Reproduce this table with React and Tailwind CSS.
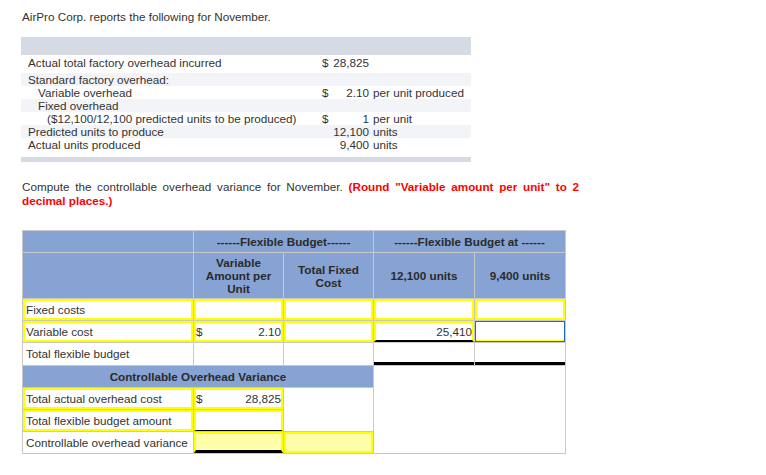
const TOP_ROWS = [
  { bg: "bg-white", h: "pt-px pb-[4px]", pad: "pl-[7px]", label: "Actual total factory overhead incurred", d: "$", amt: "28,825", unit: "" },
  { bg: "bg-[#f3f4f7]", h: "", pad: "pl-[7px]", label: "Standard factory overhead:", d: "", amt: "", unit: "" },
  { bg: "bg-white", h: "", pad: "pl-[17px]", label: "Variable overhead", d: "$", amt: "2.10", unit: "per unit produced" },
  { bg: "bg-[#f3f4f7]", h: "", pad: "pl-[17px]", label: "Fixed overhead", d: "", amt: "", unit: "" },
  { bg: "bg-white", h: "", pad: "pl-[26px]", label: "($12,100/12,100 predicted units to be produced)", d: "$", amt: "1", unit: "per unit" },
  { bg: "bg-[#f3f4f7]", h: "", pad: "pl-[7px]", label: "Predicted units to produce", d: "", amt: "12,100", unit: "units" },
  { bg: "bg-white", h: "", pad: "pl-[7px]", label: "Actual units produced", d: "", amt: "9,400", unit: "units" },
];

function TopRow({ r }) {
  return (
    <div className={`flex leading-[13px] ${r.bg} ${r.h}`}>
      <div className={`w-[297px] ${r.pad} whitespace-nowrap`}>{r.label}</div>
      <div className="w-[12px] pl-[4px]">{r.d}</div>
      <div className="w-[39px] text-right whitespace-nowrap">{r.amt}</div>
      <div className="flex-1 pl-[4px] whitespace-nowrap">{r.unit}</div>
    </div>
  );
}

const H = "bg-[#87a3d3] font-bold text-[#2a2a2a] flex items-center justify-center text-center leading-[13px]";
const W = "bg-white";
const IN = "bg-white border-2 border-[#ffff00]";

export default function App() {
  return (
    <div className="w-[766px] h-[475px] bg-white font-['Liberation_Sans',Arial,sans-serif] text-[11.7px] text-[#333] leading-[14px] pl-[21px] pt-[10px]">
      <p className="pl-px">AirPro Corp. reports the following for November.</p>

      <div className="mt-[13px] w-[450px]">
        <div className="h-[18px] bg-[#d6dae3]" />
        {TOP_ROWS.map((r, i) => (
          <TopRow key={i} r={r} />
        ))}
        <div className="h-[6px] bg-white" />
        <div className="h-[5px] bg-[#d6dae3]" />
      </div>

      <p className="mt-[18px] w-[558px] text-justify pl-px">
        Compute the controllable overhead variance for November.{" "}
        <span className="font-bold text-[#ff0000]">
          (Round "Variable amount per unit" to 2 decimal places.)
        </span>
      </p>

      <div className="mt-[22px] ml-px inline-grid grid-cols-[170px_89px_89px_100px_90px] grid-rows-[21px_45px_21px_21px_22px_21px_21px_21px_21px] gap-px bg-[#c8c8c8] p-px">
        {/* row 1 */}
        <div className={H} />
        <div className={`${H} col-span-2`}>------Flexible Budget------</div>
        <div className={`${H} col-span-2`}>------Flexible Budget at ------</div>

        {/* row 2 */}
        <div className={H} />
        <div className={H}>
          Variable
          <br />
          Amount per
          <br />
          Unit
        </div>
        <div className={H}>
          Total Fixed
          <br />
          Cost
        </div>
        <div className={H}>12,100 units</div>
        <div className={H}>9,400 units</div>

        {/* row 3 */}
        <div className={`${IN} flex items-center pl-px`}>Fixed costs</div>
        <div className={IN} />
        <div className={IN} />
        <div className={IN} />
        <div className={IN} />

        {/* row 4 */}
        <div className={`${IN} flex items-center pl-px`}>Variable cost</div>
        <div className={`${IN} flex items-center justify-between`}>
          <span>$</span>
          <span>2.10</span>
        </div>
        <div className={IN} />
        <div className="bg-white border-2 border-[#ffff00] border-b-black flex items-center justify-end">
          25,410
        </div>
        <div className="bg-white border border-[#1d6db5] shadow-[inset_0_-1px_0_#ffff00]" />

        {/* row 5 */}
        <div className={`${W} flex items-center pl-[3px]`}>Total flexible budget</div>
        <div className={W} />
        <div className={W} />
        <div className="bg-white border-b-[3px] border-black" />
        <div className="bg-white border-b-[3px] border-black" />

        {/* row 6 */}
        <div className={`${H} col-span-3`}>Controllable Overhead Variance</div>
        <div className="bg-white col-span-2 row-span-4" />

        {/* row 7 */}
        <div className={`${IN} flex items-center pl-px`}>Total actual overhead cost</div>
        <div className={`${IN} flex items-center justify-between`}>
          <span>$</span>
          <span>28,825</span>
        </div>
        <div className="bg-white row-span-2" />

        {/* row 8 */}
        <div className={`${IN} flex items-center pl-px`}>Total flexible budget amount</div>
        <div className="bg-white border-2 border-[#ffff00] border-b-black border-b" />

        {/* row 9 */}
        <div className={`${W} flex items-center pl-[3px]`}>Controllable overhead variance</div>
        <div className="bg-[#ffffaa] border-2 border-[#ffff00] border-b-[3px] border-b-black" />
        <div className="bg-[#ffffaa] border-2 border-[#ffff00]" />
      </div>
    </div>
  );
}
